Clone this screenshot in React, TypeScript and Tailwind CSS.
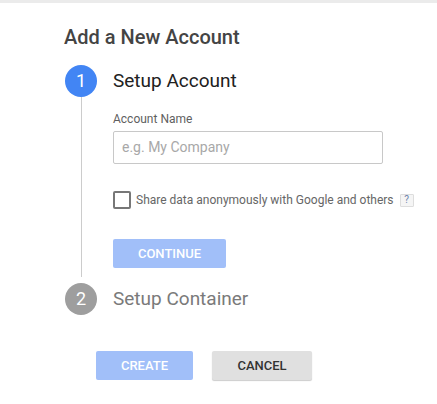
import React from "react";

export default function App() {
  return (
    <div className="w-[437px] h-[404px] bg-white overflow-hidden" style={{ fontFamily: "Roboto, 'Liberation Sans', sans-serif" }}>
      <div className="h-[3px] bg-[#ebebeb]" />
      <div className="pl-[64px]">
        <h1 className="mt-[22px] text-[20px] leading-[24px] font-medium text-[#444444]">Add a New Account</h1>

        {/* Step 1 */}
        <div className="mt-[16px] flex items-center">
          <div className="ml-px w-8 h-8 rounded-full bg-[#4285f4] flex items-center justify-center text-white text-[18px] leading-none">1</div>
          <div className="ml-4 text-[19px] leading-[32px] text-[#212121]">Setup Account</div>
        </div>
        <div className="flex">
          <div className="ml-px w-8 flex justify-center">
            <div className="w-px bg-[#cccccc]" />
          </div>
          <div className="ml-4 pt-[14px] pb-[9px]">
            <div className="text-[12px] leading-[16px] text-[#5f5f5f]">Account Name</div>
            <div className="mt-1 w-[270px] h-[33px] border border-[#c8c8c8] rounded-[2px] flex items-center pl-2 text-[14px] text-[#a8a8a8]">
              e.g. My Company
            </div>
            <div className="mt-[27px] flex items-center">
              <div className="w-[18px] h-[18px] border-2 border-[#777777] rounded-[2px]" />
              <span className="ml-[5px] text-[12px] leading-[18px] text-[#666666]">Share data anonymously with Google and others</span>
              <span className="ml-[6px] w-[14px] h-[13px] border border-[#dddddd] bg-[#f5f5f5] rounded-[1px] flex items-center justify-center text-[10px] leading-none text-[#6d84ad]">?</span>
            </div>
            <div className="mt-[30px] w-[113px] h-[29px] rounded-[2px] bg-[#a1bff9] flex items-center justify-center text-white text-[13px] font-medium">
              CONTINUE
            </div>
          </div>
        </div>

        {/* Step 2 */}
        <div className="mt-[6px] flex items-center">
          <div className="ml-px w-8 h-8 rounded-full bg-[#9e9e9e] flex items-center justify-center text-white text-[18px] leading-none">2</div>
          <div className="ml-4 text-[19px] leading-[32px] text-[#7a7a7a]">Setup Container</div>
        </div>

        {/* Buttons */}
        <div className="mt-[36px] ml-8 flex items-start gap-[19px]">
          <div className="w-[97px] h-[29px] rounded-[2px] bg-[#a1bff9] flex items-center justify-center text-white text-[13px] font-medium">CREATE</div>
          <div className="w-[100px] h-[29px] rounded-[2px] bg-[#e0e0e0] shadow-[0_1px_1px_rgba(0,0,0,0.2)] flex items-center justify-center text-[#333333] text-[13px] font-medium">CANCEL</div>
        </div>
      </div>
    </div>
  );
}
